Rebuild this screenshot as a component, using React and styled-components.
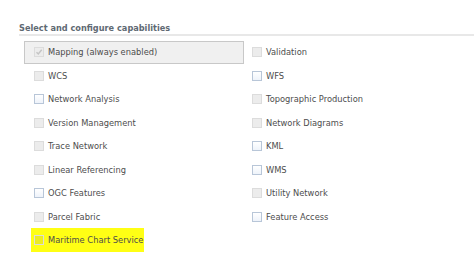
import React from "react";
import styled, { createGlobalStyle } from "styled-components";

const Global = createGlobalStyle`
  html, body { margin: 0; padding: 0; background: #fff; }
  body { font-family: "DejaVu Sans", Verdana, sans-serif; }
`;

const Page = styled.div`
  width: 474px;
  height: 277px;
  padding: 22.5px 0 0 19px;
  box-sizing: border-box;
  overflow: hidden;
`;

const Title = styled.div`
  font-size: 8.2px;
  font-weight: bold;
  color: #5f6a73;
  line-height: 11px;
  border-bottom: 2px solid #e8e8e8;
`;

const Grid = styled.div`
  display: grid;
  grid-template-columns: 220px 1fr;
  grid-auto-rows: 23.5px;
  margin: 5px 0 0 5px;
`;

const Item = styled.label`
  display: flex;
  align-items: center;
  gap: 4px;
  padding-left: ${(p) => (p.$right ? 8 : 10)}px;
  font-size: 8.3px;
  color: #4d4d4d;
  box-sizing: border-box;
  ${(p) =>
    p.$boxed &&
    `
    background: #f0f0f0;
    border: 1px solid #c8c8c8;
    padding-left: 9px;
  `}
`;

const Highlight = styled.span`
  display: flex;
  align-items: center;
  gap: 4px;
  height: 24px;
  margin-left: -3px;
  padding: 0 1px 0 3px;
  background: #ffff14;
`;

const Box = styled.span`
  width: 10px;
  height: 10px;
  box-sizing: border-box;
  flex: none;
  position: relative;
  border: 1px solid ${(p) => (p.$enabled ? "#b8c6d8" : "#dcdcdc")};
  background: ${(p) =>
    p.$enabled
      ? "linear-gradient(#ffffff, #eef3fa)"
      : p.$hl
      ? "rgba(200,200,60,0.35)"
      : "#ececec"};
`;

const Check = styled.svg`
  position: absolute;
  left: 0;
  top: 0;
`;

const CheckBox = ({ enabled, checked, hl }) => (
  <Box $enabled={enabled} $hl={hl}>
    {checked && (
      <Check width="8" height="8" viewBox="0 0 8 8">
        <path d="M1.5 4.2 L3.3 6 L6.7 1.8" fill="none" stroke="#c4c4c4" strokeWidth="1.4" />
      </Check>
    )}
  </Box>
);

const rows = [
  [{ t: "Mapping (always enabled)", checked: true, boxed: true }, { t: "Validation" }],
  [{ t: "WCS" }, { t: "WFS", enabled: true }],
  [{ t: "Network Analysis", enabled: true }, { t: "Topographic Production" }],
  [{ t: "Version Management" }, { t: "Network Diagrams" }],
  [{ t: "Trace Network" }, { t: "KML", enabled: true }],
  [{ t: "Linear Referencing" }, { t: "WMS", enabled: true }],
  [{ t: "OGC Features", enabled: true }, { t: "Utility Network" }],
  [{ t: "Parcel Fabric" }, { t: "Feature Access", enabled: true }],
  [{ t: "Maritime Chart Service", hl: true }, null],
];

export default function App() {
  return (
    <Page>
      <Global />
      <Title>Select and configure capabilities</Title>
      <Grid>
        {rows.map((r, i) =>
          r.map((c, j) =>
            c ? (
              <Item key={`${i}-${j}`} $right={j === 1} $boxed={c.boxed}>
                {c.hl ? (
                  <Highlight>
                    <CheckBox hl />
                    {c.t}
                  </Highlight>
                ) : (
                  <>
                    <CheckBox enabled={c.enabled} checked={c.checked} />
                    {c.t}
                  </>
                )}
              </Item>
            ) : (
              <span key={`${i}-${j}`} />
            )
          )
        )}
      </Grid>
    </Page>
  );
}
